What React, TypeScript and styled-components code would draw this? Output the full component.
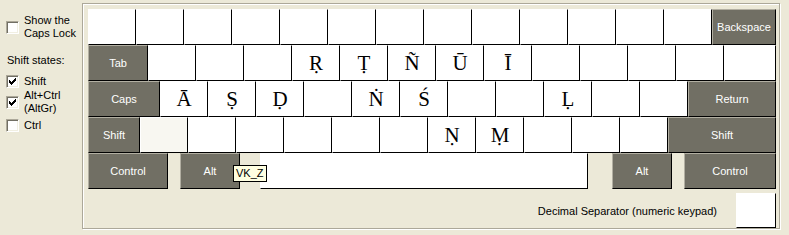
import React from "react";
import styled, { createGlobalStyle } from "styled-components";

const Global = createGlobalStyle`
  html, body { margin: 0; padding: 0; background: #ece9d8; }
  body { font-family: "Liberation Sans", Arial, sans-serif; font-size: 11px; color: #000; }
`;

const Page = styled.div`
  display: flex;
  align-items: flex-start;
  width: 789px;
  height: 235px;
  background: #ece9d8;
  overflow: hidden;
`;

const Side = styled.div`
  width: 82px;
  flex: none;
  display: flex;
  flex-direction: column;
  padding: 14px 0 0 6px;
  box-sizing: border-box;
`;

const CheckRow = styled.div<{ $mt?: number }>`
  display: flex;
  align-items: center;
  gap: 5px;
  margin-top: ${(p) => p.$mt ?? 0}px;
`;

const Box = styled.span`
  position: relative;
  flex: none;
  width: 13px;
  height: 13px;
  box-sizing: border-box;
  background: #fff;
  border: 1px solid;
  border-color: #aca899 #fff #fff #aca899;
  box-shadow: inset 1px 1px #716f64, inset -1px -1px #f1efe2;
  display: flex;
  align-items: center;
  justify-content: center;
`;

const Label = styled.span`
  line-height: 13px;
  white-space: nowrap;
`;

const Heading = styled.div<{ $mt: number }>`
  line-height: 13px;
  margin-top: ${(p) => p.$mt}px;
  margin-left: 1px;
`;

const Frame = styled.div`
  position: relative;
  margin-top: 3px;
  width: 698px;
  height: 226px;
  box-sizing: border-box;
  border: 1px solid #aca899;
  box-shadow: inset 1px 1px #fff, 1px 1px #fff;
  padding: 5px 0 0 5px;
`;

const Board = styled.div`
  width: 688px;
  display: flex;
  flex-direction: column;
`;

const Row = styled.div`
  display: flex;
  height: 36px;
`;

type Tone = "light" | "dark" | "pale";

const Key = styled.div<{ $w: number; $tone: Tone; $ml?: number; $h?: number }>`
  flex: none;
  box-sizing: border-box;
  width: ${(p) => p.$w}px;
  height: ${(p) => p.$h ?? 36}px;
  margin-left: ${(p) => p.$ml ?? 0}px;
  display: flex;
  align-items: center;
  justify-content: center;
  border-style: solid;
  border-width: 1px;
  border-color: ${(p) =>
    p.$tone === "dark" ? "#b2afa2 #000 #000 #b2afa2" : "#fff #000 #000 #fff"};
  background: ${(p) =>
    p.$tone === "dark" ? "#716f64" : p.$tone === "pale" ? "#f8f7f1" : "#fff"};
  color: ${(p) => (p.$tone === "dark" ? "#fff" : "#000")};
  font-size: 11px;
`;

const Glyph = styled.span`
  font-family: "Liberation Serif", "DejaVu Serif", "Times New Roman", serif;
  font-size: 21px;
  line-height: 1;
  color: #000;
`;

const Tip = styled.div`
  position: absolute;
  left: 150px;
  top: 161px;
  height: 17px;
  box-sizing: border-box;
  padding: 0 2px;
  border: 1px solid #000;
  background: #ffffe1;
  line-height: 15px;
  font-size: 11px;
  color: #000;
  white-space: nowrap;
`;

const DecimalRow = styled.div`
  display: flex;
  align-items: center;
  justify-content: flex-end;
  gap: 19px;
  margin-top: 4px;
  height: 35px;
`;

const Check = () => (
  <svg width="7" height="7" viewBox="0 0 7 7" shapeRendering="crispEdges">
    <polygon points="0,2 2,4 7,-1 7,2 2,7 0,5" fill="#000" />
  </svg>
);

type K = { w: number; tone?: Tone; label?: string; ch?: string; ml?: number };

const fill = (chars: string[]): K[] => chars.map((c) => ({ w: 48, ch: c }));

const rows: K[][] = [
  [...fill(Array(13).fill("")), { w: 64, tone: "dark", label: "Backspace" }],
  [
    { w: 60, tone: "dark", label: "Tab" },
    ...fill(["", "", "", "Ṛ", "Ṭ", "Ñ", "Ū", "Ī", "", "", "", ""]),
    { w: 52 },
  ],
  [
    { w: 72, tone: "dark", label: "Caps" },
    ...fill(["Ā", "Ṣ", "Ḍ", "", "Ṅ", "Ś", "", "", "Ḷ", "", ""]),
    { w: 88, tone: "dark", label: "Return" },
  ],
  [
    { w: 52, tone: "dark", label: "Shift" },
    { w: 48, tone: "pale" },
    ...fill(["", "", "", "", "", "Ṇ", "Ṃ", "", "", ""]),
    { w: 108, tone: "dark", label: "Shift" },
  ],
  [
    { w: 80, tone: "dark", label: "Control" },
    { w: 60, tone: "dark", label: "Alt", ml: 12 },
    { w: 328, ml: 20 },
    { w: 60, tone: "dark", label: "Alt", ml: 24 },
    { w: 92, tone: "dark", label: "Control", ml: 12 },
  ],
];

export default function App() {
  return (
    <>
      <Global />
      <Page>
        <Side>
          <CheckRow>
            <Box />
            <Label>
              Show the
              <br />
              Caps Lock
            </Label>
          </CheckRow>
          <Heading $mt={14}>Shift states:</Heading>
          <CheckRow $mt={8}>
            <Box>
              <Check />
            </Box>
            <Label>Shift</Label>
          </CheckRow>
          <CheckRow $mt={1}>
            <Box>
              <Check />
            </Box>
            <Label>
              Alt+Ctrl
              <br />
              (AltGr)
            </Label>
          </CheckRow>
          <CheckRow $mt={4}>
            <Box />
            <Label>Ctrl</Label>
          </CheckRow>
        </Side>
        <Frame>
          <Board>
            {rows.map((r, i) => (
              <Row key={i}>
                {r.map((k, j) => (
                  <Key key={j} $w={k.w} $tone={k.tone ?? "light"} $ml={k.ml}>
                    {k.label}
                    {k.ch ? <Glyph>{k.ch}</Glyph> : null}
                  </Key>
                ))}
              </Row>
            ))}
            <DecimalRow>
              <span>Decimal Separator (numeric keypad)</span>
              <Key $w={40} $h={35} $tone="light" />
            </DecimalRow>
          </Board>
          <Tip>VK_Z</Tip>
        </Frame>
      </Page>
    </>
  );
}
